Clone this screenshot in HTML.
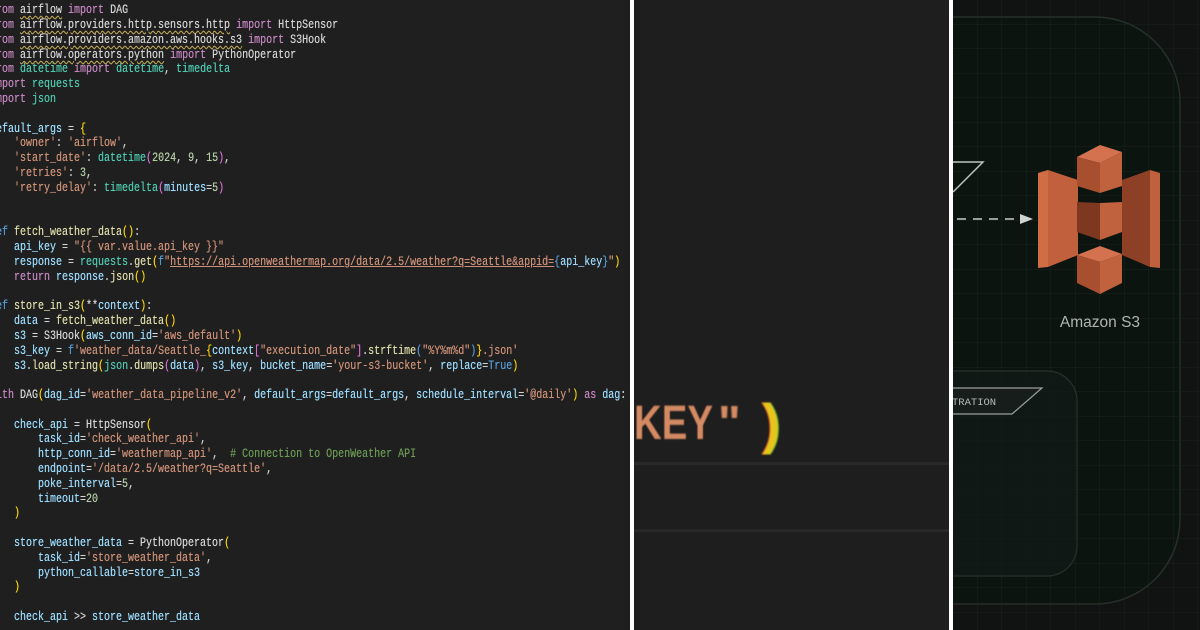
<!DOCTYPE html>
<html><head><meta charset="utf-8"><style>
*{margin:0;padding:0;box-sizing:border-box}
body{width:1200px;height:630px;overflow:hidden;background:#fff;position:relative}
#code{position:absolute;left:0;top:0;width:630px;height:630px;background:#1f1f1f;overflow:hidden;font-family:"Liberation Mono",monospace;font-size:12.5px;color:#d4d4d4}
.l{position:absolute;left:-10px;height:15px;line-height:15px;white-space:pre;transform:scaleX(0.8);transform-origin:0 0;text-shadow:0 0 0.4px currentColor}
.k{color:#c586c0}.m{color:#4ec9b0}.s{color:#ce9178}.v{color:#9cdcfe}.f{color:#dcdcaa}.b{color:#ffd700}.p{color:#da70d6}.n{color:#b5cea8}.c{color:#6a9955}.d{color:#569cd6}
.w{text-decoration:underline wavy #b8a040;text-decoration-thickness:1px;text-underline-offset:2px}
.u{text-decoration:underline;text-decoration-color:#ce9178}
#mid{position:absolute;left:634px;top:0;width:315px;height:630px;background:#1e1e1e;overflow:hidden}
#right{position:absolute;left:953px;top:0;width:247px;height:630px;background:#101312;overflow:hidden}
.big{position:absolute;font-family:'Liberation Sans',sans-serif;font-weight:bold;white-space:nowrap;filter:blur(0.7px)}
</style></head><body>
<div id="code">
<div class="l" style="top:3px"><span class="k">from</span> <span class="w">airflow</span> <span class="k">import</span> DAG</div>
<div class="l" style="top:18px"><span class="k">from</span> <span class="w">airflow.providers.http.sensors.http</span> <span class="k">import</span> HttpSensor</div>
<div class="l" style="top:33px"><span class="k">from</span> <span class="w">airflow.providers.amazon.aws.hooks.s3</span> <span class="k">import</span> S3Hook</div>
<div class="l" style="top:48px"><span class="k">from</span> <span class="w">airflow.operators.python</span> <span class="k">import</span> PythonOperator</div>
<div class="l" style="top:62px"><span class="k">from</span> <span class="m">datetime</span> <span class="k">import</span> <span class="m">datetime</span>, <span class="m">timedelta</span></div>
<div class="l" style="top:77px"><span class="k">import</span> <span class="m">requests</span></div>
<div class="l" style="top:92px"><span class="k">import</span> <span class="m">json</span></div>
<div class="l" style="top:122px"><span class="v">default_args</span> = <span class="b">{</span></div>
<div class="l" style="top:136px">    <span class="s">'owner'</span>: <span class="s">'airflow'</span>,</div>
<div class="l" style="top:151px">    <span class="s">'start_date'</span>: <span class="m">datetime</span><span class="p">(</span><span class="n">2024</span>, <span class="n">9</span>, <span class="n">15</span><span class="p">)</span>,</div>
<div class="l" style="top:166px">    <span class="s">'retries'</span>: <span class="n">3</span>,</div>
<div class="l" style="top:181px">    <span class="s">'retry_delay'</span>: <span class="m">timedelta</span><span class="p">(</span><span class="v">minutes</span>=<span class="n">5</span><span class="p">)</span></div>
<div class="l" style="top:225px"><span class="d">def</span> <span class="f">fetch_weather_data</span><span class="b">()</span>:</div>
<div class="l" style="top:240px">    <span class="v">api_key</span> = <span class="s">"{{ var.value.api_key }}"</span></div>
<div class="l" style="top:255px">    <span class="v">response</span> = <span class="m">requests</span>.<span class="f">get</span><span class="b">(</span><span class="d">f</span><span class="s">"<span class="u">https://api.openweathermap.org/data/2.5/weather?q=Seattle&amp;appid=</span></span><span class="d">{</span><span class="v">api_key</span><span class="d">}</span><span class="s">"</span><span class="b">)</span></div>
<div class="l" style="top:270px">    <span class="k">return</span> <span class="v">response</span>.<span class="f">json</span><span class="b">()</span></div>
<div class="l" style="top:299px"><span class="d">def</span> <span class="f">store_in_s3</span><span class="b">(</span>**<span class="v">context</span><span class="b">)</span>:</div>
<div class="l" style="top:314px">    <span class="v">data</span> = <span class="f">fetch_weather_data</span><span class="b">()</span></div>
<div class="l" style="top:329px">    <span class="v">s3</span> = S3Hook<span class="b">(</span><span class="v">aws_conn_id</span>=<span class="s">'aws_default'</span><span class="b">)</span></div>
<div class="l" style="top:344px">    <span class="v">s3_key</span> = <span class="d">f</span><span class="s">'weather_data/Seattle_</span><span class="b">{</span><span class="v">context</span><span class="p">[</span><span class="s">"execution_date"</span><span class="p">]</span>.<span class="f">strftime</span><span class="d">(</span><span class="s">"%Y%m%d"</span><span class="d">)</span><span class="b">}</span><span class="s">.json'</span></div>
<div class="l" style="top:359px">    <span class="v">s3</span>.<span class="f">load_string</span><span class="b">(</span><span class="m">json</span>.<span class="f">dumps</span><span class="p">(</span><span class="v">data</span><span class="p">)</span>, <span class="v">s3_key</span>, <span class="v">bucket_name</span>=<span class="s">'your-s3-bucket'</span>, <span class="v">replace</span>=<span class="d">True</span><span class="b">)</span></div>
<div class="l" style="top:388px"><span class="k">with</span> DAG<span class="b">(</span><span class="v">dag_id</span>=<span class="s">'weather_data_pipeline_v2'</span>, <span class="v">default_args</span>=<span class="v">default_args</span>, <span class="v">schedule_interval</span>=<span class="s">'@daily'</span><span class="b">)</span> <span class="k">as</span> <span class="v">dag</span>:</div>
<div class="l" style="top:418px">    <span class="v">check_api</span> = HttpSensor<span class="b">(</span></div>
<div class="l" style="top:432px">        <span class="v">task_id</span>=<span class="s">'check_weather_api'</span>,</div>
<div class="l" style="top:447px">        <span class="v">http_conn_id</span>=<span class="s">'weathermap_api'</span>,  <span class="c"># Connection to OpenWeather API</span></div>
<div class="l" style="top:462px">        <span class="v">endpoint</span>=<span class="s">'/data/2.5/weather?q=Seattle'</span>,</div>
<div class="l" style="top:477px">        <span class="v">poke_interval</span>=<span class="n">5</span>,</div>
<div class="l" style="top:492px">        <span class="v">timeout</span>=<span class="n">20</span></div>
<div class="l" style="top:506px">    <span class="b">)</span></div>
<div class="l" style="top:536px">    <span class="v">store_weather_data</span> = PythonOperator<span class="b">(</span></div>
<div class="l" style="top:551px">        <span class="v">task_id</span>=<span class="s">'store_weather_data'</span>,</div>
<div class="l" style="top:566px">        <span class="v">python_callable</span>=<span class="v">store_in_s3</span></div>
<div class="l" style="top:580px">    <span class="b">)</span></div>
<div class="l" style="top:610px">    <span class="v">check_api</span> &gt;&gt; <span class="v">store_weather_data</span></div>
</div>
<div id="mid">
<div class="big" style="left:0;top:396px;font-size:48px;line-height:56px;color:#d48a62;transform:scaleX(0.8);transform-origin:0 0">KEY</div>
<div class="big" style="left:84px;top:396px;font-size:48px;line-height:56px;color:#d48a62">"</div>
<div class="big" style="left:128px;top:392px;font-size:56px;line-height:64px;color:#e6c41e;text-shadow:-1px 0 #d04020,1px 0 #60c030">)</div>
<div style="position:absolute;left:0;top:462px;width:315px;height:3px;background:#282828"></div>
<div style="position:absolute;left:0;top:529px;width:315px;height:3px;background:#282828"></div>
</div>
<div id="right">
<svg width="247" height="630" style="position:absolute;left:0;top:0">
<defs><pattern id="g" width="24.5" height="24.5" patternUnits="userSpaceOnUse"><path d="M24.5 0V24.5M0 24.5H24.5" stroke="#1b2520" stroke-width="1" fill="none"/></pattern></defs>
<rect x="-100" y="17" width="327" height="587" rx="85" fill="#0c1410" stroke="#26302b" stroke-width="1.5"/>
<rect width="247" height="630" fill="url(#g)" opacity="0.8"/>
<rect x="-60" y="371" width="184" height="205" rx="30" fill="#131a17" fill-opacity="0.6" stroke="#28302c" stroke-width="1.2"/>
<path d="M-5 162H30L0 192" stroke="#bfc3c0" stroke-width="1.5" fill="none"/>
<path d="M4 219H67" stroke="#c8ccca" stroke-width="1.6" stroke-dasharray="9 7" fill="none"/>
<path d="M67 214L80 219L67 224Z" fill="#d0d4d2"/>
<path d="M-5 388H89L59 414H-5" stroke="#9aa09c" stroke-width="1.2" fill="#171d1a"/>
<text x="-1" y="405" font-family="Liberation Mono,monospace" font-size="10.5" fill="#b8bcb9">TRATION</text>
<g transform="translate(-953 0)">
<polygon points="1038,173 1048,170 1048,267 1038,268" fill="#d06d45"/>
<polygon points="1048,170 1078,180 1078,255 1048,267" fill="#c0603c"/>
<polygon points="1122,180 1150,170 1150,267 1122,255" fill="#8e4026"/>
<polygon points="1150,170 1160,173 1160,268 1150,267" fill="#c0603c"/>
<polygon points="1077,157 1100,145 1122,152 1100,163" fill="#d47250"/>
<polygon points="1077,157 1100,163 1100,193 1077,186" fill="#a84f30"/>
<polygon points="1100,163 1122,152 1122,186 1100,193" fill="#c0623e"/>
<polygon points="1077,202 1100,203 1100,240 1077,232" fill="#7e3820"/>
<polygon points="1100,203 1122,202 1122,232 1100,240" fill="#c0623e"/>
<polygon points="1077,255 1100,246 1122,254 1100,262" fill="#d47250"/>
<polygon points="1077,255 1100,262 1100,294 1077,283" fill="#a84f30"/>
<polygon points="1100,262 1122,254 1122,283 1100,294" fill="#c0623e"/>
</g>
<text x="147" y="327" text-anchor="middle" font-family="Liberation Sans,sans-serif" font-size="15.5" fill="#b0b4b2">Amazon S3</text>
</svg>
</div>
</body></html>
